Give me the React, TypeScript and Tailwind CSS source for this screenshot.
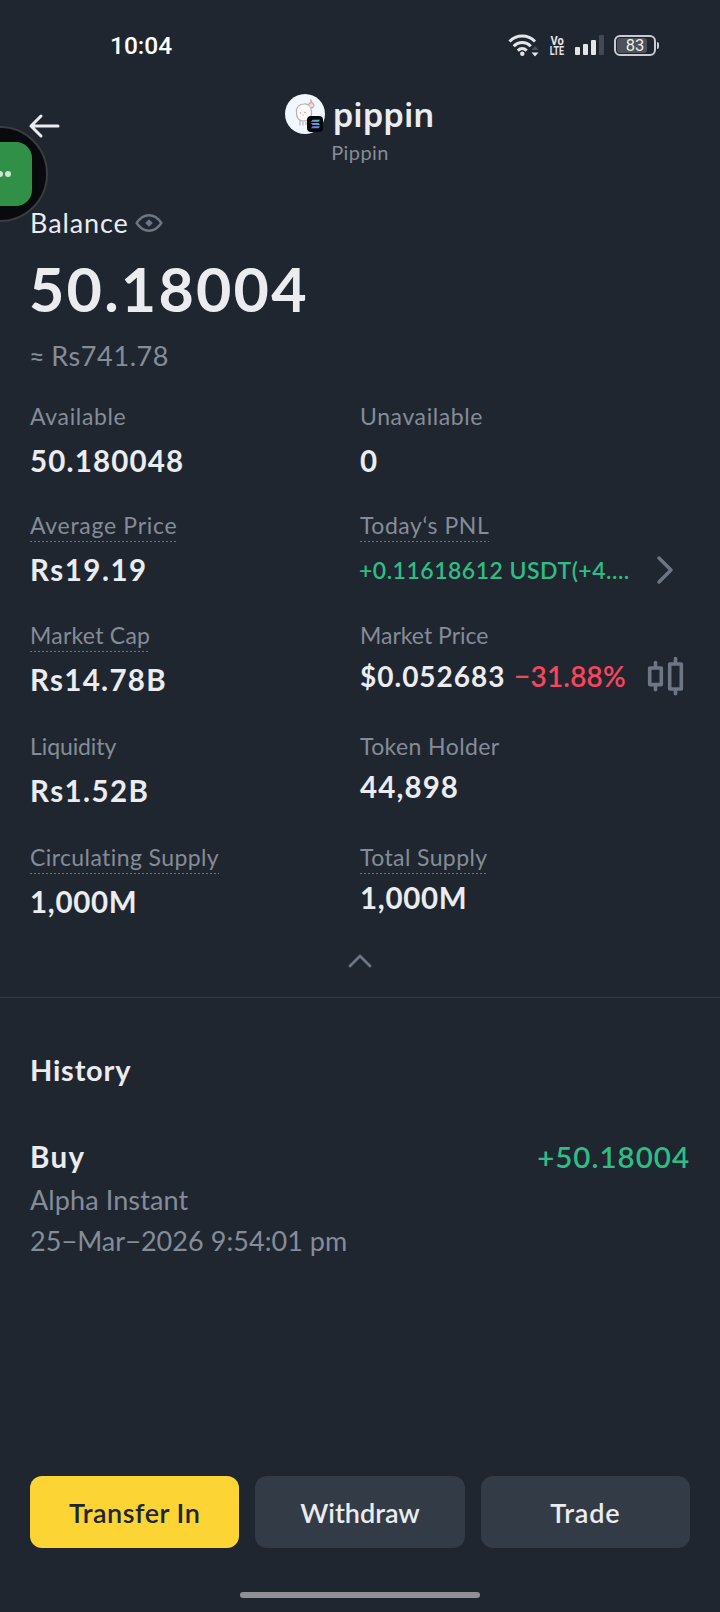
import React from 'react';
import clsx from 'clsx';

type Stat = {
    label: string;
    labelClass: string;
    underlined?: boolean;
    value: React.ReactNode;
    valueClass: string;
};

const Arrow = () => (
    <svg width="32" height="26" viewBox="0 0 32 26" fill="none" stroke="#eaecef" strokeWidth="3" strokeLinecap="round" strokeLinejoin="round">
        <path d="M30 13H3M13 3L3 13l10 10" />
    </svg>
);

const Eye = () => (
    <svg width="28" height="20" viewBox="0 0 28 20" fill="none">
        <path d="M1.6 10C5 5 9 2.2 14 2.2S23 5 26.4 10C23 15 19 17.8 14 17.8S5 15 1.6 10z" stroke="#6d7685" strokeWidth="2.4" strokeLinejoin="round" />
        <path d="M14 6.2l3.8 3.8-3.8 3.8-3.8-3.8z" fill="#6d7685" />
    </svg>
);

const Candles = () => (
    <svg width="38" height="40" viewBox="0 0 38 40" fill="none" stroke="#6d7685" strokeWidth="3.6" strokeLinecap="round" strokeLinejoin="round">
        <path d="M3.7 12h11.6v16.6H3.7zM9.5 12V6.6M9.5 28.6v5.2" />
        <path d="M23.7 8h11.6v25H23.7zM29.500 8V2.5M29.5 33v4.8" />
    </svg>
);

const TokenLogo = () => (
    <svg width="40" height="40" viewBox="0 0 40 40">
        <circle cx="20" cy="20" r="20" fill="#f1f7fe" />
        <g fill="none" stroke="#b9b2b4" strokeWidth="1.2">
            <path d="M15 27v4.5M18 28v3.5M21 28v3" />
            <path d="M11.500 18c-.5-5 3-8 7.500-8 4-.5 7.500 2.500 7.500 7.500.5 6-3 9.500-8 9.500-5 0-7.500-4-7-9z" fill="#fdfaf8" />
            <path d="M23.500 11.500c.5-3.500 4.500-4 5.500-.5 0 2-1.500 3-3 2.500" fill="#f0d9d6" />
        </g>
        <path d="M25.500 5.500l1.200 3.500" stroke="#d8b67c" strokeWidth="1.8" />
        <circle cx="15.500" cy="19" r=".8" fill="#a9a3a6" />
        <circle cx="20" cy="18.500" r=".8" fill="#a9a3a6" />
        <circle cx="18" cy="21" r=".8" fill="#e9bdb6" />
    </svg>
);

const ChainBadge = () => (
    <svg width="16" height="16" viewBox="0 0 16 16">
        <defs>
            <linearGradient id="chain" x1="0" y1="1" x2="1" y2="0">
                <stop offset="0" stopColor="#a04df5" />
                <stop offset="0.5" stopColor="#5f97d8" />
                <stop offset="1" stopColor="#2ce3a4" />
            </linearGradient>
        </defs>
        <rect width="16" height="16" rx="4" fill="#07080b" />
        <path d="M5.500 3.700h7.500l-1.500 2H4zM4 7h7.500l1.500 2H5.500zM5.500 10.300h7.500l-1.500 2H4z" fill="url(#chain)" />
    </svg>
);

const StatusBar = () => (
    <div className="flex h-[90px] items-center justify-between pr-[61px] pl-[110px]">
        <span className="pt-[2px] font-['Roboto',sans-serif] text-[24.5px] leading-[30px] font-medium text-white">10:04</span>
        <div className="flex items-center">
            <svg width="32" height="24" viewBox="0 0 32 24" fill="none" stroke="#e4e5e8" strokeWidth="3">
                <path d="M1.500 8.500c7.200-7.200 18.300-7.200 25.500 0M5.700 13.200c4.900-4.900 12.200-4.900 17.100 0M9.800 17.600c2.700-2.700 6.200-2.700 8.900 0" />
                <circle cx="14.300" cy="20.700" r="2.200" fill="#e4e5e8" stroke="none" />
                <path d="M23.500 17l3.500-4 3.500 4z" fill="#4b4f57" stroke="none" />
                <path d="M23.500 19.500h7L27 23.500z" fill="#e4e5e8" stroke="none" />
            </svg>
            <div className="ml-[9px] flex w-4 flex-col items-center font-['Roboto',sans-serif] text-[13.5px] leading-[10.5px] font-bold text-[#e4e5e8]">
                <span className="scale-x-[0.82]">Vo</span>
                <span className="scale-x-[0.66]">LTE</span>
            </div>
            <div className="ml-[10px] flex h-5 items-end gap-[3px]">
                <i className="h-2 w-[5px] rounded-[1px] bg-[#e4e5e8]" />
                <i className="h-[11px] w-[5px] rounded-[1px] bg-[#e4e5e8]" />
                <i className="h-[15px] w-[5px] rounded-[1px] bg-[#e4e5e8]" />
                <i className="h-5 w-[5px] rounded-[1px] bg-[#454952]" />
            </div>
            <div className="ml-[10px] flex h-[21px] w-[42px] items-center justify-center rounded-[6px] border-2 border-[#c9cbd1] p-px">
                <div className="relative h-full w-full">
                    <div className="absolute inset-y-0 left-0 w-[30px] rounded-[3px] bg-[#4d515a]" />
                    <span className="absolute inset-0 text-center font-['Roboto',sans-serif] text-[16.5px] leading-[16px] text-[#eceded]">83</span>
                </div>
            </div>
            <i className="ml-px h-[7px] w-[2px] rounded-r bg-[#c9cbd1]" />
        </div>
    </div>
);

const left: Stat[] = [
    { label: 'Available', labelClass: 'tracking-[0.65px]', value: '50.180048', valueClass: 'mt-[9px] tracking-[1.15px]' },
    { label: 'Average Price', labelClass: 'tracking-[0.7px]', underlined: true, value: 'Rs19.19', valueClass: 'mt-[9px] tracking-[1.5px]' },
    { label: 'Market Cap', labelClass: 'tracking-[0.25px]', underlined: true, value: 'Rs14.78B', valueClass: 'mt-[9px] tracking-[1.3px]' },
    { label: 'Liquidity', labelClass: 'tracking-[-0.1px]', value: 'Rs1.52B', valueClass: 'mt-[9px] tracking-[1.4px]' },
    { label: 'Circulating Supply', labelClass: 'tracking-[0.4px]', underlined: true, value: '1,000M', valueClass: 'mt-[9px] tracking-[0.7px]' },
];

const right: Stat[] = [
    { label: 'Unavailable', labelClass: 'tracking-[0.6px]', value: '0', valueClass: 'mt-[9px]' },
    {
        label: 'Today‘s PNL',
        labelClass: 'tracking-[0.55px]',
        underlined: true,
        valueClass: 'mt-[9px]',
        value: (
            <div className="flex items-center">
                <span className="-ml-px w-[274px] text-[23px] font-semibold tracking-[0.5px] whitespace-nowrap text-[#2ebd85]">+0.11618612 USDT(+4....</span>
                <svg className="ml-[23px]" width="18" height="30" viewBox="0 0 18 30" fill="none" stroke="#6d7685" strokeWidth="3.500" strokeLinecap="round" strokeLinejoin="round">
                    <path d="M3 3l12 12L3 27" />
                </svg>
            </div>
        ),
    },
    {
        label: 'Market Price',
        labelClass: 'tracking-[0px]',
        valueClass: 'mt-[5px]',
        value: (
            <div className="flex items-center">
                <span className="w-[154px] text-[28px] tracking-[1px]">$0.052683</span>
                <span className="w-[113px] text-[28px] font-semibold tracking-[0.2px] text-[#f6465d]">−31.88%</span>
                <span className="ml-[19px]">
                    <Candles />
                </span>
            </div>
        ),
    },
    { label: 'Token Holder', labelClass: 'tracking-[0.4px]', value: '44,898', valueClass: 'mt-[5px] tracking-[1.1px]' },
    { label: 'Total Supply', labelClass: 'tracking-[0.4px]', underlined: true, value: '1,000M', valueClass: 'mt-[5px] tracking-[0.7px]' },
];

const StatColumn = ({ items }: { items: Stat[] }) => (
    <div className="grid grid-rows-[109px_110px_111px_111px_100px]">
        {items.map((item) => (
            <div key={item.label}>
                <div className="flex h-8">
                    <span className={clsx('relative text-[23px] leading-[33px] whitespace-nowrap text-[#858c99]', item.labelClass)}>
                        {item.label}
                        {item.underlined && (
                            <i className="absolute inset-x-0 top-[32px] h-px bg-[repeating-linear-gradient(90deg,#6b7380_0_2px,transparent_2px_4px)]" />
                        )}
                    </span>
                </div>
                <div className={clsx('h-10 text-[29.5px] leading-10 font-bold whitespace-nowrap', item.valueClass)}>
                    {item.value}
                </div>
            </div>
        ))}
    </div>
);

export default function App() {
    return (
        <div className="relative flex h-[1612px] w-[720px] flex-col overflow-hidden bg-[#1f262f] font-['Lato',sans-serif] text-[#eaecef]">
            <StatusBar />

            {/* Header */}
            <header className="grid h-[110px] grid-cols-[1fr_auto_1fr] px-7">
                <div className="pt-[23px]">
                    <Arrow />
                </div>
                <div className="flex flex-col items-center">
                    <div className="flex h-[48px] items-center gap-[8px]">
                        <div className="relative h-10 w-10">
                            <TokenLogo />
                            <div className="absolute right-[2px] bottom-[2px] h-4 w-4">
                                <ChainBadge />
                            </div>
                        </div>
                        <h1 className="pt-px pr-px font-['Noto_Sans',sans-serif] text-[33px] leading-[48px] font-semibold">pippin</h1>
                    </div>
                    <p className="text-[20px] leading-7 tracking-[0.4px] text-[#858c99]">Pippin</p>
                </div>
            </header>

            {/* Balance */}
            <section className="h-[200px] px-[30px]">
                <div className="flex h-[46px] items-center gap-[6px]">
                    <span className="text-[27px] leading-[44px] tracking-[0.9px]">Balance</span>
                    <Eye />
                </div>
                <p className="-ml-px h-[84px] pt-px text-[61px] leading-[84px] font-bold tracking-[2.2px]">50.18004</p>
                <p className="flex gap-[6px] text-[27px] leading-[52px] tracking-[0.6px] text-[#858c99]">
                    <span className="-ml-px">≈</span>
                    <span>Rs741.78</span>
                </p>
            </section>

            <section className="grid h-[541px] grid-cols-2 pl-[30px]">
                <StatColumn items={left} />
                <div className="-ml-[15px]">
                    <StatColumn items={right} />
                </div>
            </section>

            <div className="flex h-[57px] justify-center border-b border-[#333b47] pt-[13px]">
                <svg width="24" height="14" viewBox="0 0 24 14" fill="none" stroke="#6d7685" strokeWidth="2.800" strokeLinecap="round" strokeLinejoin="round">
                    <path d="M2 12L12 2l10 10" />
                </svg>
            </div>

            {/* History */}
            <section className="flex-1 px-[30px] pt-[52px]">
                <h2 className="text-[29px] leading-10 font-bold tracking-[0.8px]">History</h2>
                <div className="mt-[46px] flex justify-between text-[29.5px] leading-[42px]">
                    <span className="font-bold tracking-[1.3px]">Buy</span>
                    <span className="font-semibold tracking-[1px] text-[#2ebd85]">+50.18004</span>
                </div>
                <p className="pt-px text-[27px] leading-[41px] tracking-[0.1px] text-[#858c99]">Alpha Instant</p>
                <p className="text-[27px] leading-[41px] tracking-[0.05px] text-[#858c99]">25−Mar−2026 9:54:01 pm</p>
            </section>

            <footer className="h-[136px]">
                <div className="grid grid-cols-3 gap-4 px-[30px] text-[27px] leading-[71px] font-semibold">
                    <button className="h-[72px] rounded-xl bg-[#fcd535] tracking-[0.5px] text-[#202630]">Transfer In</button>
                    <button className="h-[72px] rounded-xl bg-[#333b47]">Withdraw</button>
                    <button className="h-[72px] rounded-xl bg-[#333b47] tracking-[0.8px]">Trade</button>
                </div>
                <div className="mx-auto mt-11 h-[6px] w-[240px] rounded-full bg-[#8f9197]" />
            </footer>

            {/* Floating chat bubble, half off screen */}
            <div className="absolute top-[126px] -left-[48px] flex h-24 w-24 items-center justify-center rounded-full border-2 border-[#3a3c40] bg-[#090a0d]">
                <div className="flex h-16 w-16 items-center justify-center gap-[2px] rounded-2xl bg-[#319048]">
                    <i className="h-[6px] w-[6px] rounded-full bg-[#cfe5d4]" />
                    <i className="h-[6px] w-[6px] rounded-full bg-[#cfe5d4]" />
                    <i className="h-[6px] w-[6px] rounded-full bg-[#cfe5d4]" />
                </div>
            </div>
        </div>
    );
}
